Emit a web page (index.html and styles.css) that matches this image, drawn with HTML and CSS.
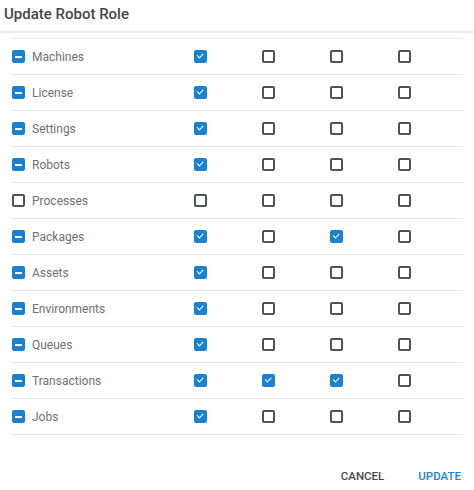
FILE: index.html
```html
<!DOCTYPE html>
<html>
<head>
<meta charset="utf-8">
<link rel="stylesheet" href="styles.css">
</head>
<body>
<div class="dialog">
  <div class="title">Update Robot Role</div>
  <div class="table">
    <div class="row"><div class="name"><span class="cb ind"></span>Machines</div><div class="cell"><span class="cb on"></span></div><div class="cell"><span class="cb"></span></div><div class="cell"><span class="cb"></span></div><div class="cell"><span class="cb"></span></div></div>
    <div class="row"><div class="name"><span class="cb ind"></span>License</div><div class="cell"><span class="cb on"></span></div><div class="cell"><span class="cb"></span></div><div class="cell"><span class="cb"></span></div><div class="cell"><span class="cb"></span></div></div>
    <div class="row"><div class="name"><span class="cb ind"></span>Settings</div><div class="cell"><span class="cb on"></span></div><div class="cell"><span class="cb"></span></div><div class="cell"><span class="cb"></span></div><div class="cell"><span class="cb"></span></div></div>
    <div class="row"><div class="name"><span class="cb ind"></span>Robots</div><div class="cell"><span class="cb on"></span></div><div class="cell"><span class="cb"></span></div><div class="cell"><span class="cb"></span></div><div class="cell"><span class="cb"></span></div></div>
    <div class="row"><div class="name"><span class="cb"></span>Processes</div><div class="cell"><span class="cb"></span></div><div class="cell"><span class="cb"></span></div><div class="cell"><span class="cb"></span></div><div class="cell"><span class="cb"></span></div></div>
    <div class="row"><div class="name"><span class="cb ind"></span>Packages</div><div class="cell"><span class="cb on"></span></div><div class="cell"><span class="cb"></span></div><div class="cell"><span class="cb on"></span></div><div class="cell"><span class="cb"></span></div></div>
    <div class="row"><div class="name"><span class="cb ind"></span>Assets</div><div class="cell"><span class="cb on"></span></div><div class="cell"><span class="cb"></span></div><div class="cell"><span class="cb"></span></div><div class="cell"><span class="cb"></span></div></div>
    <div class="row"><div class="name"><span class="cb ind"></span>Environments</div><div class="cell"><span class="cb on"></span></div><div class="cell"><span class="cb"></span></div><div class="cell"><span class="cb"></span></div><div class="cell"><span class="cb"></span></div></div>
    <div class="row"><div class="name"><span class="cb ind"></span>Queues</div><div class="cell"><span class="cb on"></span></div><div class="cell"><span class="cb"></span></div><div class="cell"><span class="cb"></span></div><div class="cell"><span class="cb"></span></div></div>
    <div class="row"><div class="name"><span class="cb ind"></span>Transactions</div><div class="cell"><span class="cb on"></span></div><div class="cell"><span class="cb on"></span></div><div class="cell"><span class="cb on"></span></div><div class="cell"><span class="cb"></span></div></div>
    <div class="row"><div class="name"><span class="cb ind"></span>Jobs</div><div class="cell"><span class="cb on"></span></div><div class="cell"><span class="cb"></span></div><div class="cell"><span class="cb"></span></div><div class="cell"><span class="cb"></span></div></div>
  </div>
  <div class="footer">
    <button class="btn cancel">CANCEL</button>
    <button class="btn update">UPDATE</button>
  </div>
</div>
</body>
</html>
```
FILE: styles.css
```css
html, body {
  margin: 0;
  padding: 0;
  background: #ffffff;
}
body {
  font-family: Roboto, "Liberation Sans", sans-serif;
  width: 474px;
  height: 490px;
  overflow: hidden;
}
.dialog {
  width: 474px;
}
.title {
  height: 33px;
  box-sizing: border-box;
  padding: 4px 0 0 4px;
  font-size: 15px;
  line-height: 20px;
  font-weight: 500;
  color: #43464a;
  border-bottom: 2px solid #eeeeee;
}
.table {
  margin: 5px 11px 0 12px;
  border-top: 1px solid #ececec;
}
.row {
  display: grid;
  grid-template-columns: 154px repeat(4, 68px) 1fr;
  height: 36px;
  box-sizing: border-box;
  border-bottom: 1px solid #e6e6e6;
  align-items: center;
}
.name {
  display: flex;
  align-items: center;
  gap: 7px;
  font-size: 12px;
  color: #6d7176;
}
.cell {
  display: flex;
  justify-content: center;
  align-items: center;
}
.cb {
  position: relative;
  display: inline-block;
  width: 13px;
  height: 13px;
  box-sizing: border-box;
  border: 2px solid #4f5256;
  border-radius: 2px;
  flex: none;
}
.cb.on, .cb.ind {
  background: #1a80d0;
  border-color: #1a80d0;
}
.cb.on::after {
  content: "";
  position: absolute;
  left: 1.5px;
  top: 1px;
  width: 5px;
  height: 2.5px;
  border-left: 1.2px solid #ffffff;
  border-bottom: 1.2px solid #ffffff;
  transform: rotate(-45deg);
}
.cb.ind::after {
  content: "";
  position: absolute;
  left: 1px;
  top: 3.5px;
  width: 7px;
  height: 2px;
  background: #ffffff;
}
.footer {
  display: flex;
  justify-content: flex-end;
  gap: 34px;
  padding-right: 13px;
  margin-top: 33px;
}
.btn {
  border: none;
  background: none;
  padding: 0;
  font-family: Roboto, "Liberation Sans", sans-serif;
  font-size: 11.5px;
  line-height: 16px;
  font-weight: 500;
}
.cancel {
  color: #45484c;
}
.update {
  color: #1a85d2;
}
```
